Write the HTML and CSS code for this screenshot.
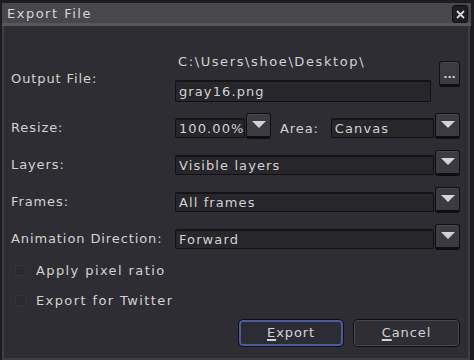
FILE: index.html
```html
<!DOCTYPE html>
<html>
<head>
<meta charset="utf-8">
<title>Export File</title>
<link rel="stylesheet" href="styles.css">
</head>
<body>
<div class="window">
  <div class="titlebar">
    <span class="title">Export File</span>
    <span class="close"><svg width="9" height="9" viewBox="0 0 9 9"><path d="M1 1L8 8M8 1L1 8" stroke="#d4d4d4" stroke-width="1.8" fill="none"/></svg></span>
  </div>
  <div class="body">
    <div class="form">
      <div class="lbl">Output File:</div>
      <div class="out-ctl">
        <div class="out-col">
          <div class="path">C:\Users\shoe\Desktop\</div>
          <div class="entry tall">gray16.png</div>
        </div>
        <div class="btn dots">...</div>
      </div>

      <div class="lbl">Resize:</div>
      <div class="resize-ctl">
        <div class="combo pct"><div class="entry">100.00%</div><div class="btn drop"><i class="arrow"></i></div></div>
        <span class="area-lbl">Area:</span>
        <div class="combo grow"><div class="entry">Canvas</div><div class="btn drop"><i class="arrow"></i></div></div>
      </div>

      <div class="lbl">Layers:</div>
      <div class="combo"><div class="entry">Visible layers</div><div class="btn drop"><i class="arrow"></i></div></div>

      <div class="lbl">Frames:</div>
      <div class="combo"><div class="entry">All frames</div><div class="btn drop"><i class="arrow"></i></div></div>

      <div class="lbl">Animation Direction:</div>
      <div class="combo"><div class="entry">Forward</div><div class="btn drop"><i class="arrow"></i></div></div>
    </div>

    <div class="checks">
      <div class="check"><span class="box"></span><span class="wide">Apply pixel ratio</span></div>
      <div class="check"><span class="box"></span><span class="wide">Export for Twitter</span></div>
    </div>

    <div class="actions">
      <div class="pbtn primary"><u>E</u>xport</div>
      <div class="pbtn"><u>C</u>ancel</div>
    </div>
  </div>
</div>
</body>
</html>
```

FILE: styles.css
```css
html, body {
  margin: 0;
  padding: 0;
  background: #1d1d20;
}

.window {
  width: 474px;
  height: 360px;
  background: #1d1d20;
  font-family: "DejaVu Sans", sans-serif;
  font-size: 13px;
  letter-spacing: 0.9px;
  color: #d2d2d4;
  display: flex;
  flex-direction: column;
  box-sizing: border-box;
  padding-top: 3px;
}

.titlebar {
  height: 20px;
  margin: 0 3px 0 2px;
  background: #47474c;
  border-bottom: 3px solid #56565b;
  display: flex;
  align-items: center;
  justify-content: space-between;
  padding: 0 3px 0 5px;
}

.title {
  color: #d6d6d8;
  line-height: 20px;
  padding-top: 1px;
  letter-spacing: 1.5px;
}

.close {
  width: 14px;
  height: 16px;
  background: #1f1f23;
  border: 1px solid #101012;
  border-radius: 3px;
  display: flex;
  align-items: center;
  justify-content: center;
  margin-top: 2px;
}

.body {
  height: 324px;
  margin: 0 4px 0 2px;
  background: #2e2d33;
  border-left: 2px solid #3e3e44;
  border-right: 2px solid #3e3e44;
  border-bottom: 2px solid #3e3e44;
  display: flex;
  flex-direction: column;
  padding: 26px 8px 0 7px;
}

.form {
  display: grid;
  grid-template-columns: 164px 1fr;
  grid-template-rows: 50px 26px 26px 26px 26px;
  row-gap: 11px;
}

.lbl {
  align-self: center;
  white-space: nowrap;
  padding-top: 2px;
}

.out-ctl {
  display: flex;
  gap: 8px;
}

.out-col {
  flex: 1;
  display: flex;
  flex-direction: column;
  gap: 9px;
}

.path {
  height: 19px;
  line-height: 19px;
  padding-left: 3px;
  letter-spacing: 1.6px;
}

.entry {
  box-sizing: border-box;
  height: 20px;
  margin-top: 5px;
  background: #27262b;
  border: 1px solid #111113;
  border-top: 2px solid #141416;
  border-radius: 2px;
  padding-left: 3px;
  line-height: 17px;
  white-space: nowrap;
  overflow: hidden;
  flex: 1;
  letter-spacing: 1.1px;
}

.entry.tall {
  height: 22px;
  margin-top: 0;
  flex: none;
  line-height: 19px;
}

.btn {
  box-sizing: border-box;
  background: #3c3b41;
  border: 1px solid #0f0f11;
  border-bottom: 3px solid #0f0f11;
  border-radius: 3px;
  box-shadow: inset 0 1px 0 #48474d;
}

.dots {
  width: 21px;
  height: 26px;
  margin-top: 9px;
  display: flex;
  align-items: flex-end;
  justify-content: center;
  line-height: 12px;
  letter-spacing: 0;
  font-weight: bold;
  font-size: 11px;
  padding-bottom: 3px;
}

.combo {
  display: flex;
  gap: 1px;
  height: 26px;
}

.drop {
  width: 25px;
  height: 26px;
  display: flex;
  align-items: center;
  justify-content: center;
  padding-bottom: 2px;
}

.arrow {
  width: 0;
  height: 0;
  border-left: 7px solid transparent;
  border-right: 7px solid transparent;
  border-top: 7px solid #d4d4d6;
}

.resize-ctl {
  display: flex;
  align-items: flex-start;
}

.pct {
  width: 96px;
}

.area-lbl {
  margin: 0 12px 0 9px;
  line-height: 20px;
  padding-top: 6px;
}

.grow {
  flex: 1;
}

.checks {
  display: flex;
  flex-direction: column;
  gap: 10px;
  margin-top: 10px;
  padding-left: 4px;
}

.check {
  display: flex;
  align-items: center;
  gap: 10px;
  height: 20px;
}

.wide {
  letter-spacing: 1.4px;
}

.box {
  width: 9px;
  height: 9px;
  background: #2a292e;
  border: 1px solid #36353b;
  border-radius: 2px;
}

.actions {
  display: flex;
  justify-content: flex-end;
  gap: 9px;
  margin-top: 9px;
}

.pbtn {
  box-sizing: border-box;
  width: 107px;
  height: 28px;
  border-radius: 5px;
  border: 1px solid #101012;
  box-shadow: inset 0 0 0 1px #4a4a50;
  background: #2f2e34;
  display: flex;
  align-items: center;
  justify-content: center;
  padding-bottom: 1px;
}

.pbtn.primary {
  width: 106px;
  box-shadow: inset 0 0 0 2px #4d5b9e;
  background: #2c2c34;
}

.pbtn u {
  text-decoration-thickness: 2px;
  text-underline-offset: 2px;
}
```
